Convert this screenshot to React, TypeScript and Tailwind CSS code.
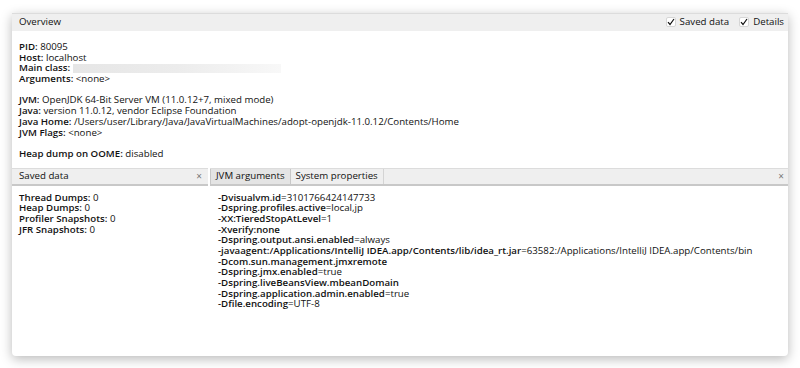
const font = 'font-["Lucida_Grande","Open_Sans","DejaVu_Sans",sans-serif]';

const jvmArgs: [string, string][] = [
  ['-Dvisualvm.id', '=3101766424147733'],
  ['-Dspring.profiles.active', '=local,jp'],
  ['-XX:TieredStopAtLevel', '=1'],
  ['-Xverify:none', ''],
  ['-Dspring.output.ansi.enabled', '=always'],
  [
    '-javaagent:/Applications/IntelliJ IDEA.app/Contents/lib/idea_rt.jar',
    '=63582:/Applications/IntelliJ IDEA.app/Contents/bin',
  ],
  ['-Dcom.sun.management.jmxremote', ''],
  ['-Dspring.jmx.enabled', '=true'],
  ['-Dspring.liveBeansView.mbeanDomain', ''],
  ['-Dspring.application.admin.enabled', '=true'],
  ['-Dfile.encoding', '=UTF-8'],
];

function Line({ label, value }: { label: string; value: string }) {
  return (
    <div className="h-[10.7px] whitespace-nowrap">
      <span className="font-semibold">{label}</span> {value}
    </div>
  );
}

function Check({ label }: { label: string }) {
  return (
    <div className="flex items-center gap-[4px]">
      <div className="w-[10px] h-[10px] rounded-[2px] bg-white border border-[#d6d6d6] flex items-center justify-center">
        <svg width="8" height="8" viewBox="0 0 8 8">
          <path d="M1 4.2 L3 6.5 L7 1" stroke="#111" strokeWidth="1.2" fill="none" />
        </svg>
      </div>
      <span>{label}</span>
    </div>
  );
}

function Close() {
  return <span className="text-[#777] text-[10px] leading-none">×</span>;
}

export default function App() {
  return (
    <div className={`w-[800px] h-[368px] bg-white pt-[13px] pl-[12px] ${font} text-[9.7px] leading-[10.7px] text-[#111]`}>
      <div className="w-[776px] h-[343px] bg-white rounded-b-[4px] shadow-[0_3px_12px_rgba(0,0,0,0.28)] flex flex-col overflow-hidden">
        {/* Overview header */}
        <div className="h-[18px] bg-[#efefef] border-t border-[#dcdcdc] flex items-center justify-between pl-[7px] pr-[4px]">
          <span>Overview</span>
          <div className="flex items-center gap-[10px]">
            <Check label="Saved data" />
            <Check label="Details" />
          </div>
        </div>

        {/* Overview details */}
        <div className="pl-[7px] pt-[11px]">
          <Line label="PID:" value="80095" />
          <Line label="Host:" value="localhost" />
          <div className="h-[10.7px] flex items-center whitespace-nowrap">
            <span className="font-semibold">Main class:</span>
            <div className="ml-[3px] w-[208px] h-[9px] bg-gradient-to-r from-[#e6e6e6] via-[#ececec] to-[#f8f8f8]" />
          </div>
          <Line label="Arguments:" value="<none>" />
          <div className="h-[10.7px]" />
          <Line label="JVM:" value="OpenJDK 64-Bit Server VM (11.0.12+7, mixed mode)" />
          <Line label="Java:" value="version 11.0.12, vendor Eclipse Foundation" />
          <Line
            label="Java Home:"
            value="/Users/user/Library/Java/JavaVirtualMachines/adopt-openjdk-11.0.12/Contents/Home"
          />
          <Line label="JVM Flags:" value="<none>" />
          <div className="h-[10.7px]" />
          <Line label="Heap dump on OOME:" value="disabled" />
        </div>

        {/* Lower panels */}
        <div className="mt-[8px] flex flex-1">
          <div className="w-[196px] flex flex-col">
            <div className="h-[18px] bg-[#efefef] border-t border-[#dcdcdc] border-b-2 border-b-[#c8c8c8] flex items-center justify-between pl-[7px] pr-[6px]">
              <span>Saved data</span>
              <Close />
            </div>
            <div className="pl-[7px] pt-[7px]">
              <Line label="Thread Dumps:" value="0" />
              <Line label="Heap Dumps:" value="0" />
              <Line label="Profiler Snapshots:" value="0" />
              <Line label="JFR Snapshots:" value="0" />
            </div>
          </div>
          <div className="w-[2px] bg-white" />
          <div className="flex-1 flex flex-col">
            <div className="h-[18px] bg-[#efefef] border-t border-[#dcdcdc] border-b-2 border-b-[#c8c8c8] flex items-stretch">
              <div className="px-[5px] flex items-center bg-[#e4e4e4] border-x border-[#c8c8c8]">JVM arguments</div>
              <div className="px-[5px] flex items-center border-r border-[#d4d4d4]">System properties</div>
              <div className="flex-1" />
              <div className="flex items-center pr-[4px]">
                <Close />
              </div>
            </div>
            <div className="pl-[8px] pt-[7px]">
              {jvmArgs.map(([k, v]) => (
                <div key={k} className="h-[10.7px] whitespace-nowrap">
                  <span className="font-semibold">{k}</span>
                  {v}
                </div>
              ))}
            </div>
          </div>
        </div>
      </div>
    </div>
  );
}
